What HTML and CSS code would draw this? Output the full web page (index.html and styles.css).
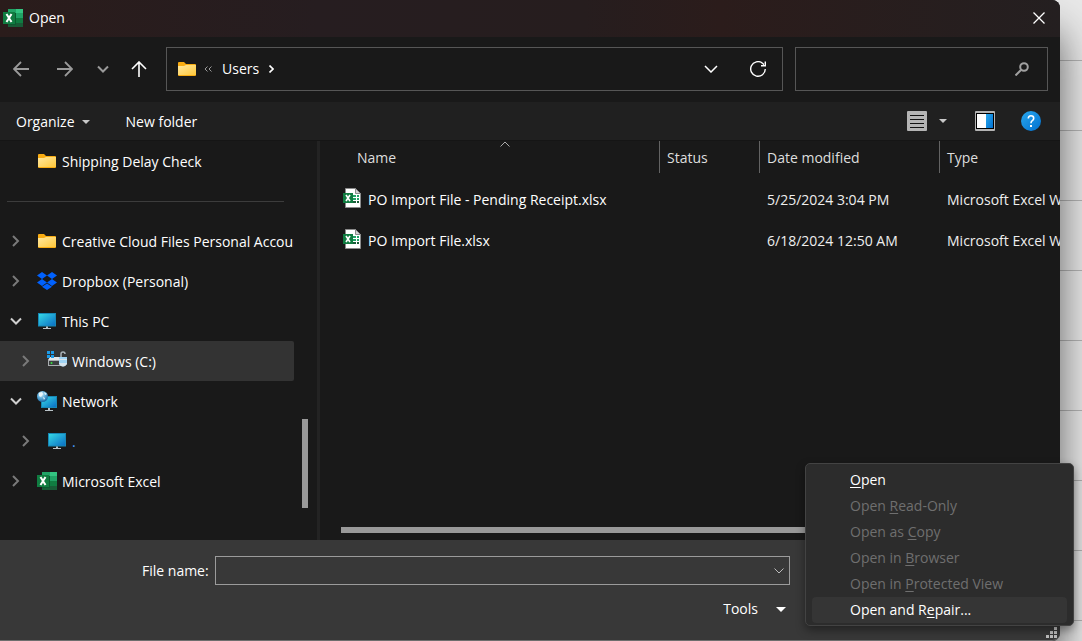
FILE: index.html
```
<!DOCTYPE html>
<html lang="en">
<head>
    <meta charset="UTF-8">
    <meta name="viewport" content="width=device-width, initial-scale=1.0">
    <title>Open</title>
    <link rel="stylesheet" href="styles.css">
</head>
<body>
    <!-- Shared icons -->
    <svg class="sprite" aria-hidden="true">
        <defs>
            <linearGradient id="folder-fill" x1="0" y1="0" x2="1" y2="1">
                <stop offset="0" stop-color="#ffe8a0"/>
                <stop offset="1" stop-color="#ffc83a"/>
            </linearGradient>
            <linearGradient id="screen-fill" x1="0" y1="0" x2="1" y2="1">
                <stop offset="0" stop-color="#35d8e6"/>
                <stop offset="1" stop-color="#0b6fc4"/>
            </linearGradient>
            <linearGradient id="blue-fill" x1="0" y1="0" x2="1" y2="1">
                <stop offset="0" stop-color="#2aa8ee"/>
                <stop offset="1" stop-color="#0070d0"/>
            </linearGradient>
            <radialGradient id="globe-fill" cx="0.4" cy="0.3" r="0.7">
                <stop offset="0" stop-color="#d8f0fa"/>
                <stop offset="0.5" stop-color="#62b0dc"/>
                <stop offset="1" stop-color="#1b6aa5"/>
            </radialGradient>
        </defs>
        <symbol id="excel" viewBox="0 0 20 18">
            <path fill="#21a366" d="M5 0h8v4H5z"/>
            <path fill="#33c481" d="M13 0h7v4h-7z"/>
            <path fill="#21a366" d="M13 4h7v5h-7z"/>
            <path fill="#107c41" d="M5 4h8v5H5zM13 9h7v5h-7z"/>
            <path fill="#185c37" d="M5 9h8v5H5zM5 14h15v4H5z"/>
            <path fill="#0b5a30" d="M12 4h1v12H5v-1h7z"/>
            <path fill="#107c41" d="M0 3h12v12H0z"/>
            <path stroke="#fff" stroke-width="2" fill="none" d="M3.500 5l5 8M8.500 5l-5 8"/>
        </symbol>
        <symbol id="folder" viewBox="0 0 18 14">
            <path fill="#f9ac12" d="M0 1q0-1 1-1h5l2 2h9q1 0 1 1v10q0 1-1 1H1q-1 0-1-1z"/>
            <path fill="url(#folder-fill)" d="M0 4h6l2-1h10v10H0z"/>
        </symbol>
        <symbol id="dropbox" viewBox="0 0 20 18">
            <path fill="#0061fe" d="M5 0l5 3.500L5 7 0 3.500zM15 0l5 3.500L15 7l-5-3.500zM5 7l5 3.500L5 14 0 10.500zM15 7l5 3.500-5 3.500-5-3.500zM10 11.500l5 3.300-5 3.200-5-3.200z"/>
        </symbol>
        <symbol id="monitor" viewBox="0 0 18 16">
            <path fill="#1788b5" d="M0 0h18v13.500H0z"/>
            <path fill="url(#screen-fill)" d="M1 1h16v11.500H1z"/>
            <path fill="#b9c3c8" d="M8 13.500h2V15h3v1H5v-1h3z"/>
        </symbol>
        <symbol id="network" viewBox="0 0 20 20">
            <path fill="#1788b5" d="M4 5h16v12H4z"/>
            <path fill="url(#screen-fill)" d="M5 6h14v10H5z"/>
            <path fill="#b9c3c8" d="M11 17h2v2h3v1H8v-1h3z"/>
            <circle cx="5.500" cy="5.500" r="5.500" fill="url(#globe-fill)"/>
            <path fill="#e9f7fc" d="M2 2l3-1 1 2-2 3-2-1zM7 1l3 2-2 1zM6 6l2 1-1 2z"/>
        </symbol>
        <symbol id="drive" viewBox="0 0 20 16">
            <path fill="#e3e6e8" d="M3 6h13l2 3H1z"/>
            <path fill="#a9adb0" d="M1 9h17v6H1z"/>
            <path fill="#3c3f41" d="M2 10h12v4H2z"/>
            <path fill="#1c9be8" d="M0 0h3v3H0zM4 0h3v3H4zM0 4h3v3H0zM4 4h3v3H4z"/>
            <circle cx="4.500" cy="12" r="1" fill="#37e03c"/>
            <path stroke="#a8b0b5" stroke-width="1.500" fill="none" d="M14 6V3q0-2 2-2t2 2"/>
            <path fill="#9fd3f3" d="M12 6h8v7q-4 5-8 0z"/>
            <path fill="#d5e3ec" d="M12 8h8v1h-8zM12 12h8v1q-4 5-8 0z"/>
        </symbol>
        <symbol id="sheet" viewBox="0 0 18 20">
            <path fill="#fff" stroke="#8b8b8b" d="M2.500.5h10l5 5v14h-15z"/>
            <path fill="#d2d2d2" stroke="#8b8b8b" d="M12.500.5v5h5z"/>
            <path fill="#21a366" d="M10 7h3v2h-3zM14 7h2v2h-2zM10 10h3v2h-3zM14 10h2v2h-2z"/>
            <path fill="#185c37" d="M10 13h3v2h-3zM14 13h2v2h-2z"/>
            <path fill="#107c41" d="M0 5h10v10H0z"/>
            <path stroke="#fff" stroke-width="1.600" fill="none" d="M3 7l4 6M7 7l-4 6"/>
        </symbol>
        <symbol id="chevron-right" viewBox="0 0 8 12">
            <path fill="none" stroke="currentColor" stroke-width="2" d="M1 1l5 5-5 5"/>
        </symbol>
        <symbol id="chevron-down" viewBox="0 0 12 8">
            <path fill="none" stroke="currentColor" stroke-width="2" d="M1 1.500l5 5 5-5"/>
        </symbol>
        <symbol id="caret" viewBox="0 0 8 4">
            <path fill="currentColor" d="M0 0h8L4 4z"/>
        </symbol>
    </svg>

    <div class="dialog">
        <header class="titlebar">
            <svg class="icon-excel"><use href="#excel"/></svg>
            <h1>Open</h1>
            <button class="close" aria-label="Close">
                <svg width="12" height="12" viewBox="0 0 12 12" fill="none" stroke="#fff" stroke-width="1.300"><path d="M.5.5l11 11M11.500.5l-11 11"/></svg>
            </button>
        </header>

        <nav class="navbar">
            <div class="nav-buttons">
                <button class="dim" aria-label="Back">
                    <svg width="16" height="16" viewBox="0 0 16 16" fill="none" stroke="currentColor" stroke-width="1.800"><path d="M16 8H1M8 1L1 8l7 7"/></svg>
                </button>
                <button class="dim" aria-label="Forward">
                    <svg width="16" height="16" viewBox="0 0 16 16" fill="none" stroke="currentColor" stroke-width="1.800"><path d="M0 8h15M8 1l7 7-7 7"/></svg>
                </button>
                <button class="dim recent" aria-label="Recent locations">
                    <svg width="12" height="8"><use href="#chevron-down"/></svg>
                </button>
                <button aria-label="Up">
                    <svg width="16" height="16" viewBox="0 0 16 16" fill="none" stroke="currentColor" stroke-width="1.600"><path d="M8 16V1M1 8l7-7 7 7"/></svg>
                </button>
            </div>
            <div class="address">
                <svg class="icon-folder"><use href="#folder"/></svg>
                <svg class="dim" width="8" height="6" viewBox="0 0 8 6" fill="none" stroke="currentColor"><path d="M3.500.5L1 3l2.500 2.500M7.500.5L5 3l2.500 2.500"/></svg>
                <a href="#">Users</a>
                <svg width="5" height="8" viewBox="0 0 5 8" fill="none" stroke="#fff" stroke-width="1.600"><path d="M.5.5L4 4 .5 7.500"/></svg>
                <button class="history" aria-label="Previous locations">
                    <svg width="14" height="8" viewBox="0 0 14 8" fill="none" stroke="#fff" stroke-width="1.500"><path d="M1 1l6 6 6-6"/></svg>
                </button>
                <button aria-label="Refresh">
                    <svg width="16" height="16" viewBox="0 0 16 16" fill="none" stroke="#fff" stroke-width="1.400"><path d="M15.300 8A7.300 7.300 0 1 1 12.500 2.200L15 4.500M15.300.5v4.300H11"/></svg>
                </button>
            </div>
            <div class="search">
                <input type="text" aria-label="Search">
                <svg width="14" height="14" viewBox="0 0 14 14" fill="none" stroke="#a0a0a0" stroke-width="2"><circle cx="9" cy="5" r="3.800"/><path d="M6 8l-5.500 5.500"/></svg>
            </div>
        </nav>

        <div class="toolbar">
            <button class="command">Organize <svg class="caret"><use href="#caret"/></svg></button>
            <button class="command">New folder</button>
            <div class="view-tools">
                <button class="view" aria-label="Change view">
                    <svg width="20" height="20" viewBox="0 0 20 20"><rect width="20" height="20" rx="1" fill="#b4b4b4"/><path stroke="#111" d="M3 4.500h14M3 8.500h14M3 12.500h14M3 16.500h14"/></svg>
                    <svg class="caret"><use href="#caret"/></svg>
                </button>
                <button aria-label="Preview pane">
                    <svg width="20" height="20" viewBox="0 0 20 20"><rect width="20" height="20" rx="1" fill="#b4b4b4"/><path fill="#000" d="M1 2h18v16H1z"/><path fill="#fff" d="M2 3h9v14H2z"/><path fill="url(#blue-fill)" d="M11 3h7v14h-7z"/></svg>
                </button>
                <button aria-label="Help">
                    <svg width="20" height="20" viewBox="0 0 20 20"><circle cx="10" cy="10" r="10" fill="url(#blue-fill)"/><path fill="none" stroke="#fff" stroke-width="1.600" d="M7.300 7.500q0-2.700 2.700-2.700t2.700 2.400q0 1.500-1.400 2.500T10 12.300"/><path fill="#fff" d="M9 14h2v2H9z"/></svg>
                </button>
            </div>
        </div>

        <main class="content">
            <aside class="sidebar">
                <ul class="tree">
                    <li><span class="twisty"></span><svg class="icon-folder"><use href="#folder"/></svg>Shipping Delay Check</li>
                    <li class="separator"></li>
                    <li><svg class="twisty"><use href="#chevron-right"/></svg><svg class="icon-folder"><use href="#folder"/></svg>Creative Cloud Files Personal Account</li>
                    <li><svg class="twisty"><use href="#chevron-right"/></svg><svg class="icon-excel"><use href="#dropbox"/></svg>Dropbox (Personal)</li>
                    <li><svg class="twisty open"><use href="#chevron-down"/></svg><svg class="icon-monitor"><use href="#monitor"/></svg>This PC</li>
                    <li class="child selected"><svg class="twisty"><use href="#chevron-right"/></svg><svg class="icon-drive"><use href="#drive"/></svg>Windows (C:)</li>
                    <li><svg class="twisty open"><use href="#chevron-down"/></svg><svg class="icon-network"><use href="#network"/></svg>Network</li>
                    <li class="child"><svg class="twisty"><use href="#chevron-right"/></svg><svg class="icon-monitor"><use href="#monitor"/></svg><span class="host">.</span></li>
                    <li><svg class="twisty"><use href="#chevron-right"/></svg><svg class="icon-excel"><use href="#excel"/></svg>Microsoft Excel</li>
                </ul>
                <div class="scroll-track"><div class="scroll-thumb"></div></div>
            </aside>

            <section class="files">
                <table>
                    <thead>
                        <tr>
                            <th class="col-name"><div>Name</div>
                                <svg class="sort" width="10" height="6" viewBox="0 0 10 6" fill="none" stroke="#aaa"><path d="M.5 5.500L5 1l4.500 4.500"/></svg>
                            </th>
                            <th class="col-status"><div>Status</div></th>
                            <th class="col-date"><div>Date modified</div></th>
                            <th class="col-type"><div>Type</div></th>
                        </tr>
                    </thead>
                    <tbody>
                        <tr>
                            <td class="file"><svg class="icon-sheet"><use href="#sheet"/></svg>PO Import File - Pending Receipt.xlsx</td>
                            <td></td>
                            <td>5/25/2024 3:04 PM</td>
                            <td>Microsoft Excel Worksheet</td>
                        </tr>
                        <tr>
                            <td class="file"><svg class="icon-sheet"><use href="#sheet"/></svg>PO Import File.xlsx</td>
                            <td></td>
                            <td>6/18/2024 12:50 AM</td>
                            <td>Microsoft Excel Worksheet</td>
                        </tr>
                    </tbody>
                </table>
                <div class="scroll-bottom"></div>
            </section>
        </main>

        <footer class="footer">
            <div class="filename">
                <label for="filename">File name:</label>
                <div class="combo">
                    <input type="text" id="filename">
                    <button aria-label="Show file names">
                        <svg width="10" height="6" viewBox="0 0 10 6" fill="none" stroke="#bbb"><path d="M.5.5L5 5 9.500.5"/></svg>
                    </button>
                </div>
            </div>
            <button class="tools">Tools <svg width="10" height="5"><use href="#caret"/></svg></button>
            <svg class="grip" width="11" height="11" viewBox="0 0 11 11" fill="#bdbdbd"><path d="M8 0h3v3H8zM4 4h3v3H4zM8 4h3v3H8zM0 8h3v3H0zM4 8h3v3H4zM8 8h3v3H8z"/></svg>
        </footer>

        <div class="menu" role="menu">
            <button role="menuitem"><u>O</u>pen</button>
            <button role="menuitem" disabled>Open <u>R</u>ead-Only</button>
            <button role="menuitem" disabled>Open as <u>C</u>opy</button>
            <button role="menuitem" disabled>Open in <u>B</u>rowser</button>
            <button role="menuitem" disabled>Open in <u>P</u>rotected View</button>
            <button role="menuitem" class="active">Open and R<u>e</u>pair...</button>
        </div>
    </div>
</body>
</html>
```
FILE: styles.css
```
* {
    box-sizing: border-box;
}
body {
    margin: 0;
    font-family: "Open Sans", "Noto Sans", sans-serif;
    font-size: 14px;
    line-height: 20px;
    color: #fff;
    /* worksheet rows behind the dialog */
    background: repeating-linear-gradient(transparent 0 69px, #b4b4b4 69px 70px) 0 -9px, #e8e8e8;
    overflow: hidden;
}
.sprite {
    position: absolute;
    width: 0;
    height: 0;
}
svg {
    flex: none;
    display: block;
}
button {
    display: flex;
    align-items: center;
    padding: 0;
    border: none;
    background: none;
    color: inherit;
    font: inherit;
}
input {
    flex: 1;
    min-width: 0;
    border: none;
    outline: none;
    background: none;
    color: inherit;
    font: inherit;
}
.dim {
    color: #9a9a9a;
}
.caret {
    width: 8px;
    height: 4px;
    color: #c8c8c8;
}
.icon-excel {
    width: 20px;
    height: 18px;
}
.icon-folder {
    width: 18px;
    height: 14px;
}
.icon-monitor {
    width: 18px;
    height: 16px;
}
.icon-network {
    width: 20px;
    height: 20px;
}
.icon-drive {
    width: 20px;
    height: 16px;
}
.icon-sheet {
    width: 18px;
    height: 20px;
}

.dialog {
    position: relative;
    display: flex;
    flex-direction: column;
    height: 100vh;
    margin-right: 22px;
    background: #191919;
    border-radius: 0 8px 8px 0;
    box-shadow: 0 32px 40px rgba(0, 0, 0, 0.6);
}

/* Title bar */
.titlebar {
    display: flex;
    align-items: center;
    height: 37px;
    padding: 0 15px 1px 3px;
    border-radius: 0 8px 0 0;
    background: linear-gradient(90deg, #2a1c1b, #261d20 30%, #261d1e 55%, #2b1c1b 68%, #241f20);
}
.titlebar h1 {
    margin: 0 auto 0 6px;
    font-size: 14px;
    font-weight: normal;
}

/* Navigation */
.navbar {
    display: flex;
    align-items: center;
    height: 65px;
    padding: 0 12px 2px 13px;
}
.nav-buttons {
    display: flex;
    align-items: center;
    width: 153px;
    gap: 24px;
}
.nav-buttons button:first-child {
    margin-right: 4px;
}
.nav-buttons .recent {
    margin-right: -2px;
}
.address,
.search {
    display: flex;
    align-items: center;
    height: 44px;
    border: 1px solid #565656;
}
.address {
    flex: 1;
    gap: 10px;
    padding: 0 16px 0 11px;
}
.address svg.dim {
    margin-left: -2px;
}
.address a {
    color: #fff;
    text-decoration: none;
}
.history {
    margin-left: auto;
    margin-right: 22px;
}
.search {
    width: 253px;
    margin-left: 12px;
    padding: 0 18px 0 10px;
}

/* Toolbar */
.toolbar {
    display: flex;
    align-items: center;
    height: 39px;
    padding: 0 19px 0 16px;
    gap: 36px;
    background: #202020;
    border-bottom: 1px solid #151515;
}
.command {
    gap: 7px;
    padding-top: 2px;
}
.view-tools {
    display: flex;
    align-items: center;
    gap: 26px;
    margin-left: auto;
}
.view {
    gap: 12px;
    margin-right: 2px;
}

/* Folder tree */
.content {
    display: flex;
    flex: 1;
    min-height: 0;
}
.sidebar {
    display: flex;
    width: 320px;
    border-right: 3px solid #232323;
}
.tree {
    width: 294px;
    margin: 0;
    padding: 0;
    list-style: none;
    overflow: hidden;
}
.tree li {
    display: flex;
    align-items: center;
    height: 40px;
    padding: 2px 0 0 10px;
    white-space: nowrap;
}
.tree li.child {
    padding-left: 20px;
}
.tree li.selected {
    background: #333;
    border-radius: 0 2px 2px 0;
}
.tree li.separator {
    height: 1px;
    margin: 20px 10px 19px 7px;
    padding: 0;
    background: #3c3c3c;
}
.twisty {
    width: 12px;
    height: 12px;
    margin: 0 15px 2px 0;
    color: #7a7a7a;
}
.twisty.open {
    height: 8px;
    color: #d0d0d0;
}
.tree .icon-folder,
.tree .icon-monitor {
    margin: 0 6px 2px 1px;
}
.tree .icon-excel,
.tree .icon-network,
.tree .icon-drive {
    margin: 0 5px 2px 0;
}
.tree .icon-drive {
    margin-bottom: 6px;
}
.host {
    color: #4a9eff;
}
.scroll-track {
    padding: 278px 0 0 8px;
}
.scroll-thumb {
    width: 6px;
    height: 89px;
    background: #999;
}

/* File list */
.files {
    display: flex;
    flex: 1;
    flex-direction: column;
    min-width: 0;
    padding: 0 0 7px 21px;
    overflow: hidden;
}
table {
    width: 838px;
    table-layout: fixed;
    border-collapse: collapse;
}
th {
    position: relative;
    height: 38px;
    padding: 0;
    vertical-align: top;
    font-weight: normal;
    text-align: left;
    color: #dedede;
}
th div {
    height: 32px;
    padding: 7px 0 0 7px;
    border-left: 1px solid #636363;
}
.col-name {
    width: 318px;
}
.col-name div {
    padding-left: 15px;
    border-left-color: transparent;
}
.col-status {
    width: 100px;
}
.col-date {
    width: 180px;
}
.sort {
    position: absolute;
    top: 0;
    left: 50%;
}
td {
    height: 41px;
    padding: 0 0 0 8px;
    white-space: nowrap;
    color: #eee;
}
td.file {
    padding-left: 2px;
    color: #fff;
}
.file svg {
    display: inline-block;
    margin: -4px 7px 0 0;
    vertical-align: -3px;
}
.scroll-bottom {
    width: 80%;
    height: 6px;
    margin-top: auto;
    background: #999;
}

/* Footer */
.footer {
    position: relative;
    height: 101px;
    padding: 16px 0 0 142px;
    background: #383838;
    border-bottom: 1px solid #6e6e6e;
    border-radius: 0 0 8px 0;
}
.filename {
    display: flex;
    align-items: center;
    margin-right: 270px;
}
.filename label {
    width: 73px;
}
.combo {
    display: flex;
    flex: 1;
    height: 29px;
    padding-right: 5px;
    border: 1px solid #9b9b9b;
}
.tools {
    gap: 18px;
    margin: 14px 274px 0 auto;
}
.grip {
    position: absolute;
    right: 3px;
    bottom: 2px;
}

/* Open button menu */
.menu {
    position: absolute;
    right: -14px;
    bottom: 15px;
    width: 269px;
    padding: 3px 6px 2px;
    background: #2c2c2c;
    border: 1px solid #434343;
    border-radius: 5px;
    box-shadow: 0 4px 10px rgba(0, 0, 0, 0.4);
}
.menu button {
    width: 100%;
    height: 26px;
    padding-left: 38px;
    border-radius: 4px;
    white-space: pre;
}
.menu button:disabled {
    color: #6f6f6f;
}
.menu .active {
    background: #353535;
}
.menu u {
    text-underline-offset: 2px;
}
```
